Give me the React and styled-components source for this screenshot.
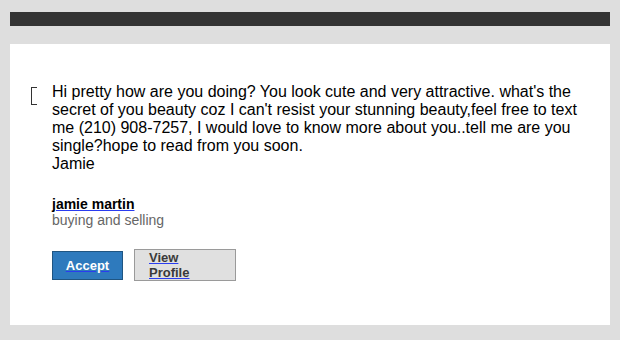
import React from "react";
import styled, { createGlobalStyle } from "styled-components";

const Global = createGlobalStyle`
  html, body { margin: 0; padding: 0; background: #dedede; }
  body { font-family: "Liberation Sans", Arial, Helvetica, sans-serif; }
`;

const Page = styled.div`
  padding: 12px 10px 15px;
  display: flex;
  flex-direction: column;
  gap: 18px;
`;

const TopBar = styled.div`
  height: 14px;
  background: #333333;
`;

const Panel = styled.div`
  background: #ffffff;
  height: 281px;
  box-sizing: border-box;
  padding: 39px 30px 0 21px;
`;

const MessageRow = styled.div`
  display: flex;
  align-items: flex-start;
`;

const Bracket = styled.span`
  flex: none;
  width: 5px;
  height: 16px;
  margin-top: 4px;
  margin-right: 15px;
  border: 1px solid #333;
  border-right: none;
`;

const Body = styled.div`
  flex: 1;
  color: #000;
`;

const Message = styled.p`
  margin: 0;
  font-size: 16px;
  line-height: 18px;
  color: #000;
`;

const Sender = styled.div`
  margin-top: 23px;
  font-size: 14px;
  line-height: 16px;
`;

const NameLine = styled.div``;

const Name = styled.a`
  color: #000;
  font-weight: bold;
  text-decoration: underline;
  text-decoration-color: #2a3cf0;
`;

const Role = styled.div`
  color: #666;
`;

const Actions = styled.div`
  margin-top: 21px;
  display: flex;
  align-items: center;
  gap: 11px;
`;

const Button = styled.button`
  box-sizing: border-box;
  font-family: "Liberation Sans", Arial, Helvetica, sans-serif;
  font-size: 13px;
  font-weight: bold;
  line-height: 15px;
  text-align: left;
  cursor: pointer;
  span {
    text-decoration: underline;
    text-decoration-color: #2a3cf0;
  }
`;

const AcceptButton = styled(Button)`
  width: 71px;
  height: 29px;
  background: #2e7abd;
  border: 1px solid #1f5582;
  color: #ffffff;
  text-align: center;
  padding: 0;
`;

const ProfileButton = styled(Button)`
  width: 102px;
  height: 32px;
  background: #e0e0e0;
  border: 1px solid #9a9a9a;
  color: #3a3a3a;
  padding: 0 0 0 14px;
  span { display: block; }
`;

export default function App() {
  return (
    <>
      <Global />
      <Page>
        <TopBar />
        <Panel>
          <MessageRow>
            <Bracket />
            <Body>
              <Message>
                Hi pretty how are you doing? You look cute and very attractive. what's the
                secret of you beauty coz I can't resist your stunning beauty,feel free to text
                me (210) 908-7257, I would love to know more about you..tell me are you
                single?hope to read from you soon.
                <br />
                Jamie
              </Message>
              <Sender>
                <NameLine>
                  <Name href="#">jamie martin</Name>
                </NameLine>
                <Role>buying and selling</Role>
              </Sender>
              <Actions>
                <AcceptButton><span>Accept</span></AcceptButton>
                <ProfileButton><span>View</span><span>Profile</span></ProfileButton>
              </Actions>
            </Body>
          </MessageRow>
        </Panel>
      </Page>
    </>
  );
}
